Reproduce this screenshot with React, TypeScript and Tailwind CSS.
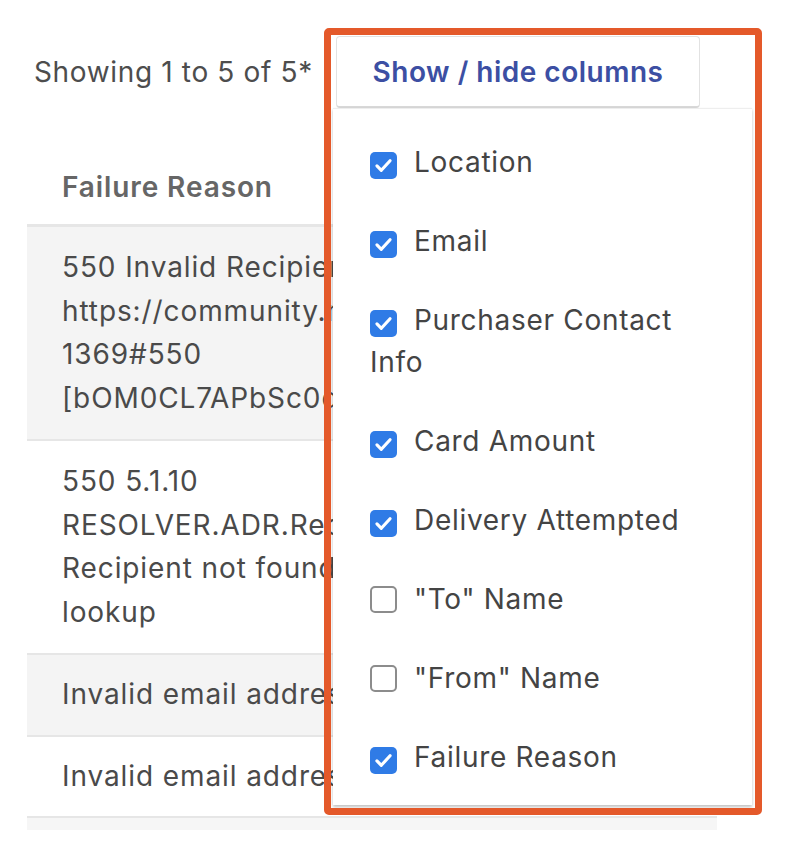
const columns = [
  { label: "Location", on: true },
  { label: "Email", on: true },
  { label: "Purchaser Contact Info", on: true },
  { label: "Card Amount", on: true },
  { label: "Delivery Attempted", on: true },
  { label: "\"To\" Name", on: false },
  { label: "\"From\" Name", on: false },
  { label: "Failure Reason", on: true },
]

const rows = [
  {
    lines: [
      "550 Invalid Recipient",
      "https://community.mimecast.com/docs/DOC-",
      "1369#550",
      "[bOM0CL7APbSc0dpx3TZDCw.us226]",
    ],
    shaded: true,
  },
  {
    lines: [
      "550 5.1.10",
      "RESOLVER.ADR.RecipientNotFound;",
      "Recipient not found by SMTP address",
      "lookup",
    ],
    shaded: false,
  },
  { lines: ["Invalid email address"], shaded: true },
  { lines: ["Invalid email address"], shaded: false },
]

function Box({ on }: { on: boolean }) {
  if (!on)
    return <span className="w-[27px] h-[27px] shrink-0 rounded-[5px] border-2 border-[#8c8c8c] bg-white" />
  return (
    <span className="w-[27px] h-[27px] shrink-0 rounded-[5px] bg-[#2f7be6] flex items-center justify-center">
      <svg width="21" height="21" viewBox="0 0 24 24" fill="none">
        <path d="M4.5 12.5l5 5L19.5 6.5" stroke="white" strokeWidth="3.6" strokeLinecap="round" strokeLinejoin="round" />
      </svg>
    </span>
  )
}

export default function App() {
  return (
    <div className="relative w-[802px] h-[846px] bg-white overflow-hidden font-['Inter',sans-serif]">

      <div className="flex items-center pt-[36px] h-[108px]">
        <div className="pl-[34px] w-[336px] text-[28px] text-[#4d4d4d] tracking-[0.65px] whitespace-nowrap">Showing 1 to 5 of 5*</div>
        <div className="w-[364px] h-[72px] flex items-center justify-center border border-[#e2e2e2] border-b-2 border-b-[#d8d8d8] rounded-sm text-[28px] font-semibold tracking-[0.5px] text-[#3c4fa3]">
          Show / hide columns
        </div>
      </div>

      <div className="ml-[27px] w-[690px] mt-[42px]">
        <div className="h-[77px] flex items-center pl-[35px] text-[28px] tracking-[0.9px] font-semibold text-[#666] border-b-[3px] border-[#e6e6e6]">
          Failure Reason
        </div>
        {rows.map((r, i) => (
          <div
            key={i}
            className={`pl-[35px] border-b-2 border-[#e6e6e6] text-[28px] tracking-[0.9px] leading-[43.5px] text-[#4a4a4a] whitespace-nowrap ${r.lines.length > 1 ? "py-[19px]" : "py-[18px]"} ${r.shaded ? "bg-[#f4f4f4]" : "bg-white"}`}
          >
            {r.lines.map((l, j) => (
              <div key={j}>{l}</div>
            ))}
          </div>
        ))}
        <div className="h-[12px] bg-[#f6f6f6]" />
      </div>

      {/* dropdown */}
      <div className="absolute left-[333px] top-[108px] w-[419px] h-[697px] bg-white border-t border-[#eeeeee] shadow-[0_2px_3px_rgba(0,0,0,0.25)] pt-[32px] pl-[37px] pr-[40px]">
        <div className="flex flex-col gap-[37px]">
          {columns.map((c) => (
            <div key={c.label} className="text-[28px] tracking-[0.7px] leading-[42px] text-[#444]">
              <span className="inline-flex align-[-4px] mr-[17px]"><Box on={c.on} /></span>
              {c.label}
            </div>
          ))}
        </div>
      </div>

      {/* highlight frame */}
      <div className="absolute left-[324px] top-[28px] w-[438px] h-[787px] border-[7px] border-[#e4592a] rounded-[5px]" />
    </div>
  )
}
